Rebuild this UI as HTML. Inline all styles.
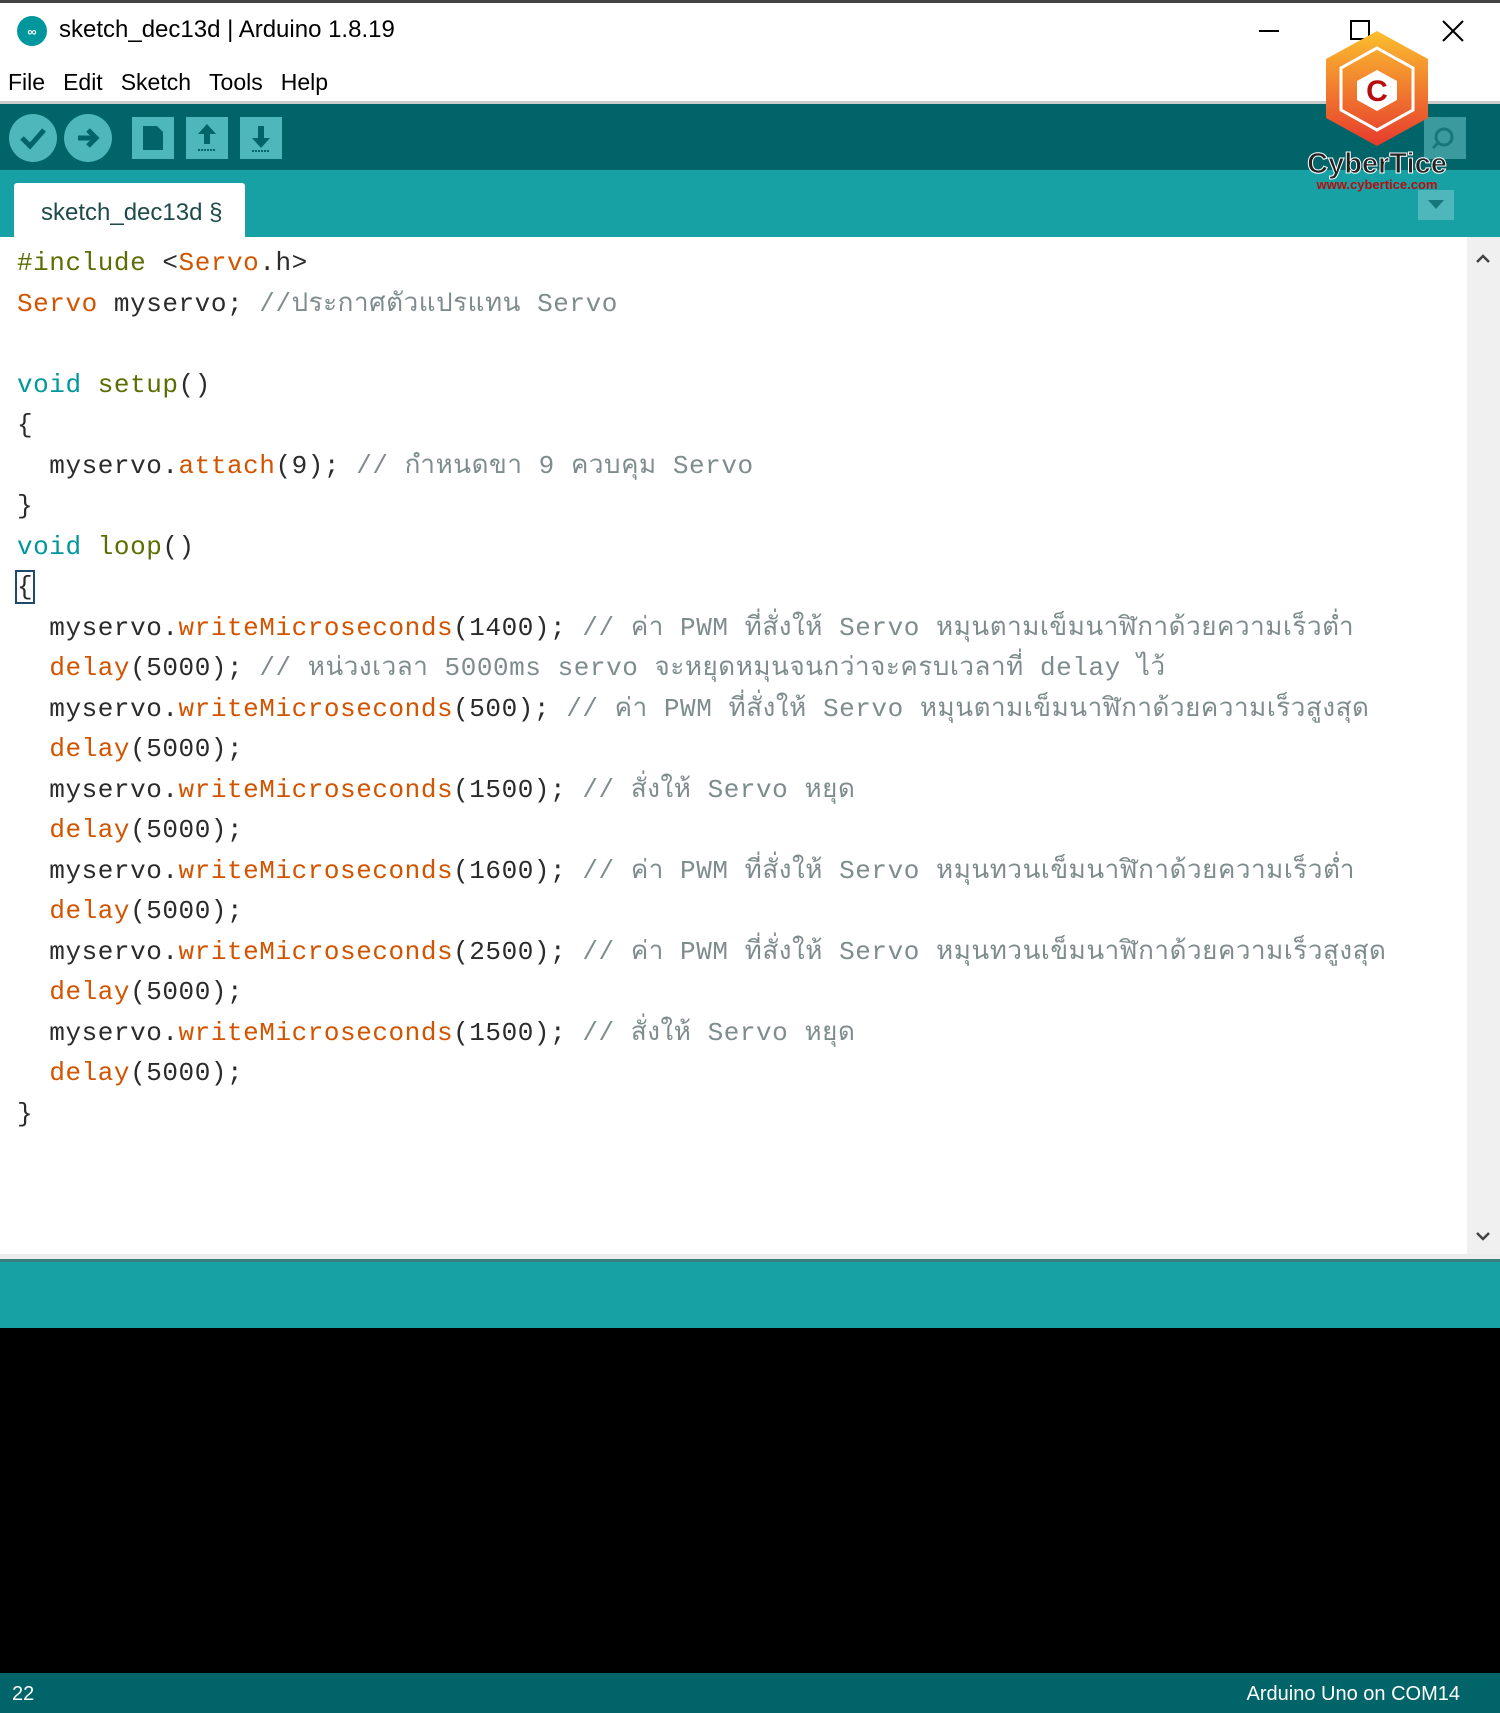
<!DOCTYPE html>
<html><head><meta charset="utf-8"><style>
*{margin:0;padding:0;box-sizing:border-box}
body{width:1500px;height:1713px;position:relative;background:#fff;overflow:hidden;font-family:"Liberation Sans",sans-serif}
.abs{position:absolute}
#title{left:59px;top:16px;font-size:24px;color:#000}
#menu{top:69px;left:8px;font-size:23px;color:#000}
#menu span{margin-right:18px}
#code{left:17px;top:243px;font-family:"Liberation Mono","DejaVu Sans Mono",monospace;font-size:26px;letter-spacing:0.55px;line-height:40.5px;color:#2b2b2b;white-space:pre}
.o{color:#d35400}.c{color:#7f8c8d}.k{color:#00979c}.t{color:#5e6d03}
</style></head><body>
<div class="abs" style="left:0;top:0;width:1500px;height:3px;background:#444"></div>
<svg class="abs" style="left:16px;top:15px" width="32" height="32"><circle cx="16" cy="16" r="15" fill="#00979c"/><text x="16" y="21" font-size="13" fill="#fff" text-anchor="middle" font-family="Liberation Sans" font-weight="bold">∞</text></svg>
<div id="title" class="abs">sketch_dec13d | Arduino 1.8.19</div>
<svg class="abs" style="left:1255px;top:16px" width="230" height="30" stroke="#000" stroke-width="2" fill="none"><line x1="4" y1="15" x2="24" y2="15"/><rect x="96" y="5" width="18" height="18"/><line x1="188" y1="5" x2="208" y2="25"/><line x1="208" y1="5" x2="188" y2="25"/></svg>
<div id="menu" class="abs"><span>File</span><span>Edit</span><span>Sketch</span><span>Tools</span><span>Help</span></div>
<div class="abs" style="left:0;top:101px;width:1500px;height:3px;background:#ccc"></div>
<div class="abs" style="left:0;top:104px;width:1500px;height:66px;background:#006468"></div>
<svg class="abs" style="left:0;top:104px" width="300" height="66">
<circle cx="33" cy="34" r="24" fill="#4db7bb"/><path d="M22 34l8 8 14-16" stroke="#006468" stroke-width="5" fill="none"/>
<circle cx="88" cy="34" r="24" fill="#4db7bb"/><path d="M78 34h16M88 26l8 8-8 8" stroke="#006468" stroke-width="5" fill="none"/>
<rect x="132" y="13" width="42" height="42" fill="#4db7bb"/><path d="M143 22h14l6 6v18h-20z" fill="#006468"/>
<rect x="186" y="13" width="42" height="42" fill="#4db7bb"/><path d="M207 20l-9 10h6v10h6V30h6z" fill="#006468"/><line x1="198" y1="46" x2="216" y2="46" stroke="#006468" stroke-width="2" stroke-dasharray="2 1"/>
<rect x="240" y="13" width="42" height="42" fill="#4db7bb"/><path d="M261 44l-9-10h6V22h6v12h6z" fill="#006468"/><line x1="252" y1="47" x2="270" y2="47" stroke="#006468" stroke-width="2" stroke-dasharray="2 1"/>
</svg>
<div class="abs" style="left:1424px;top:117px;width:42px;height:42px;background:#3b9a9e"></div>
<svg class="abs" style="left:1424px;top:117px" width="42" height="42" fill="none" stroke="#17777a" stroke-width="3"><circle cx="20" cy="20" r="8"/><line x1="14" y1="26" x2="9" y2="31"/></svg>
<div class="abs" style="left:0;top:170px;width:1500px;height:67px;background:#17a1a5"></div>
<div class="abs" style="left:14px;top:183px;width:231px;height:54px;background:#fff;border-radius:3px 3px 0 0"></div>
<div class="abs" style="left:41px;top:199px;font-size:24px;color:#1f4a4c">sketch_dec13d §</div>
<div class="abs" style="left:1418px;top:190px;width:36px;height:30px;background:#4db7bb"></div>
<svg class="abs" style="left:1418px;top:190px" width="36" height="30"><path d="M10 10h16l-8 9z" fill="#17777a"/></svg>
<svg class="abs" style="left:1300px;top:28px" width="180" height="170">
<defs><linearGradient id="g" x1="0" y1="0" x2="0" y2="1"><stop offset="0" stop-color="#fbbf2e"/><stop offset="1" stop-color="#e63a2e"/></linearGradient></defs>
<polygon points="77,3 128,31 128,90 77,118 26,90 26,31" fill="url(#g)"/>
<polygon points="77,20 113,40 113,82 77,102 41,82 41,40" fill="none" stroke="#fff" stroke-width="3"/>
<polygon points="77,42 97,53 97,72 77,83 57,72 57,53" fill="#fff"/>
<text x="77" y="73" font-size="30" font-weight="bold" fill="#b80d0d" text-anchor="middle" font-family="Liberation Sans">C</text>
<text x="77" y="145" font-size="29" font-weight="bold" fill="#222" stroke="#fff" stroke-width="1" text-anchor="middle" font-family="Liberation Sans">CyberTice</text>
<text x="77" y="161" font-size="13" font-weight="bold" fill="#b80d0d" text-anchor="middle" font-family="Liberation Sans">www.cybertice.com</text>
</svg>
<div class="abs" style="left:1467px;top:237px;width:33px;height:1017px;background:#f0f0f0"></div>
<svg class="abs" style="left:1467px;top:245px" width="33" height="1005" fill="none" stroke="#444" stroke-width="2.5"><path d="M10 17l6-6 6 6"/><path d="M10 988l6 6 6-6"/></svg>
<div id="code" class="abs"><span class="t">#include</span> &lt;<span class="o">Servo</span>.h&gt;
<span class="o">Servo</span> myservo; <span class="c">//ประกาศตัวแปรแทน Servo</span>

<span class="k">void</span> <span class="t">setup</span>()
{
  myservo.<span class="o">attach</span>(9); <span class="c">// กำหนดขา 9 ควบคุม Servo</span>
}
<span class="k">void</span> <span class="t">loop</span>()
<span style="outline:2px solid #1f4a6c">{</span>
  myservo.<span class="o">writeMicroseconds</span>(1400); <span class="c">// ค่า PWM ที่สั่งให้ Servo หมุนตามเข็มนาฬิกาด้วยความเร็วต่ำ</span>
  <span class="o">delay</span>(5000); <span class="c">// หน่วงเวลา 5000ms servo จะหยุดหมุนจนกว่าจะครบเวลาที่ delay ไว้</span>
  myservo.<span class="o">writeMicroseconds</span>(500); <span class="c">// ค่า PWM ที่สั่งให้ Servo หมุนตามเข็มนาฬิกาด้วยความเร็วสูงสุด</span>
  <span class="o">delay</span>(5000);
  myservo.<span class="o">writeMicroseconds</span>(1500); <span class="c">// สั่งให้ Servo หยุด</span>
  <span class="o">delay</span>(5000);
  myservo.<span class="o">writeMicroseconds</span>(1600); <span class="c">// ค่า PWM ที่สั่งให้ Servo หมุนทวนเข็มนาฬิกาด้วยความเร็วต่ำ</span>
  <span class="o">delay</span>(5000);
  myservo.<span class="o">writeMicroseconds</span>(2500); <span class="c">// ค่า PWM ที่สั่งให้ Servo หมุนทวนเข็มนาฬิกาด้วยความเร็วสูงสุด</span>
  <span class="o">delay</span>(5000);
  myservo.<span class="o">writeMicroseconds</span>(1500); <span class="c">// สั่งให้ Servo หยุด</span>
  <span class="o">delay</span>(5000);
}</div>
<div class="abs" style="left:0;top:1254px;width:1500px;height:6px;background:#ececec"></div>
<div class="abs" style="left:0;top:1259px;width:1500px;height:3px;background:#3d7f80"></div>
<div class="abs" style="left:0;top:1262px;width:1500px;height:66px;background:#17a1a5"></div>
<div class="abs" style="left:0;top:1328px;width:1500px;height:345px;background:#000"></div>
<div class="abs" style="left:0;top:1673px;width:1500px;height:40px;background:#006468"></div>
<div class="abs" style="left:12px;top:1683px;font-size:20px;color:#fff">22</div>
<div class="abs" style="right:40px;top:1683px;font-size:20px;color:#fff">Arduino Uno on COM14</div>
</body></html>
